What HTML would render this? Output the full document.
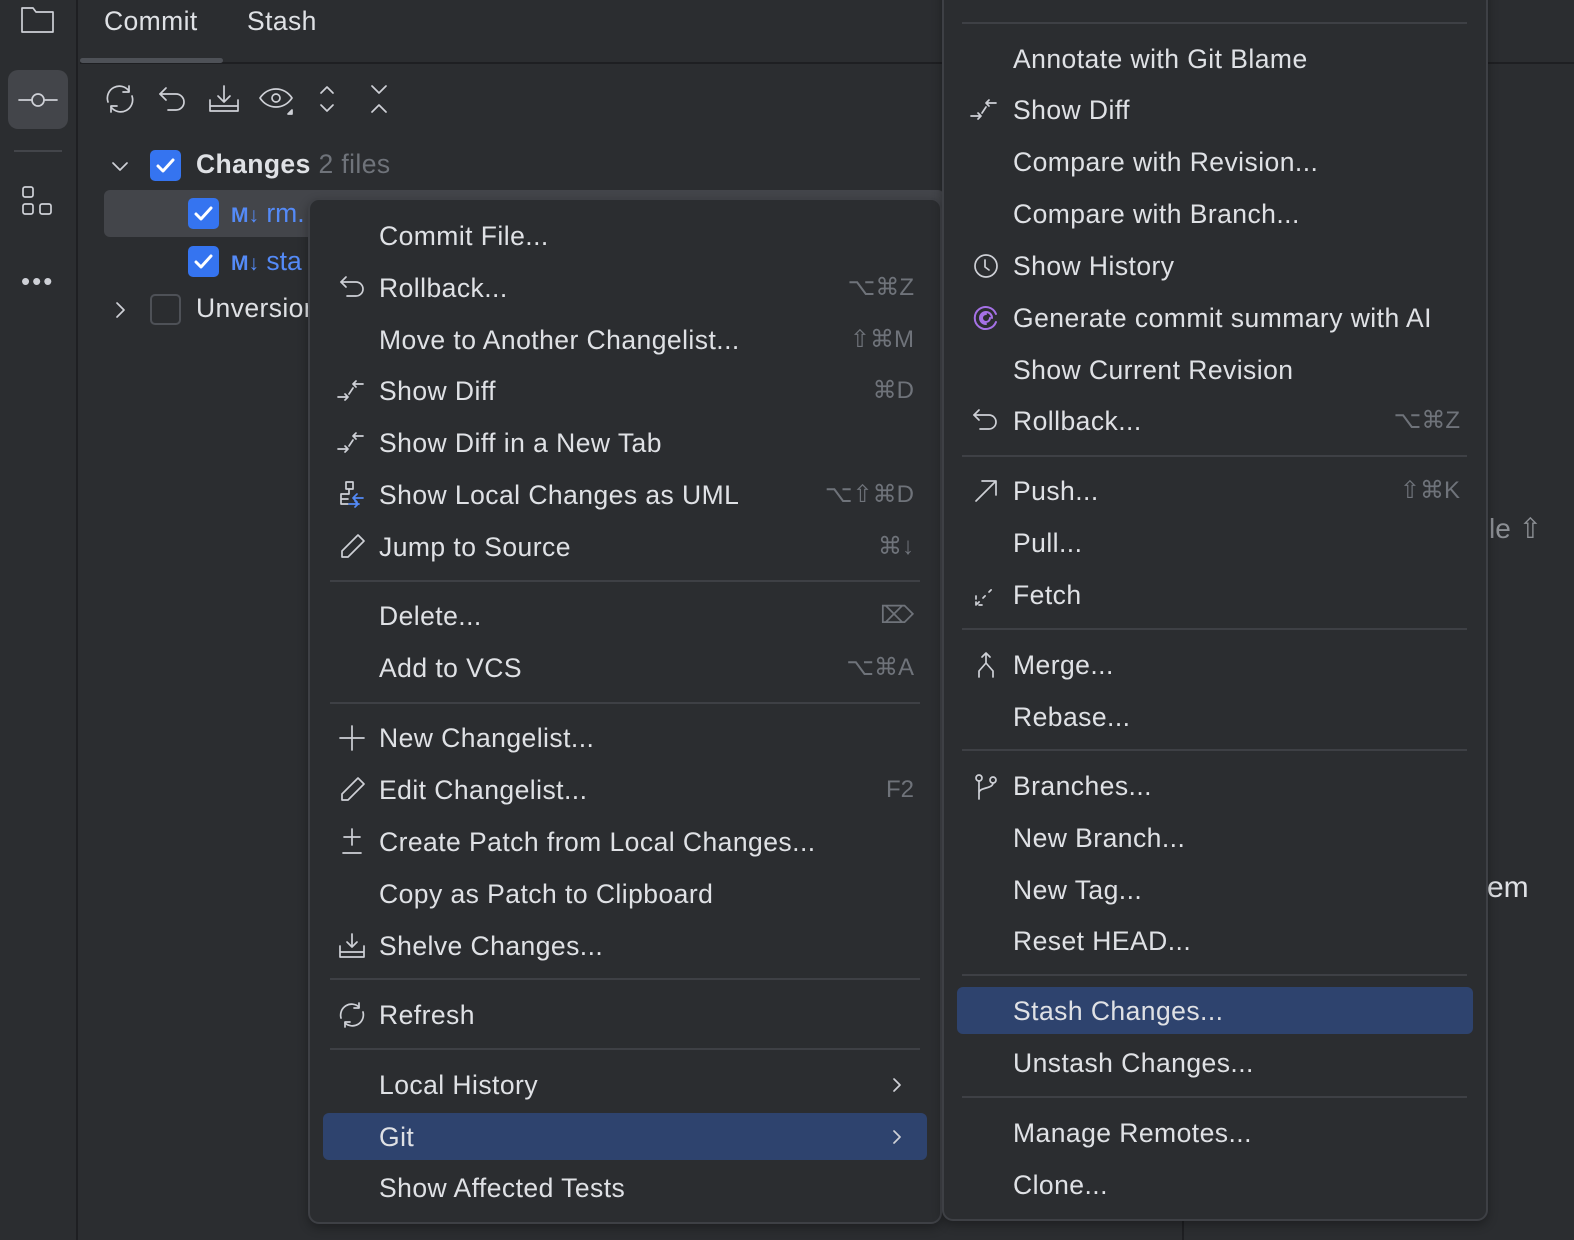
<!DOCTYPE html>
<html><head><meta charset="utf-8"><style>
*{margin:0;padding:0;box-sizing:border-box}
body{width:1574px;height:1240px;background:#2b2d30;font-family:"Liberation Sans",sans-serif;color:#dfe1e5;position:relative;overflow:hidden}
.a{position:absolute}
.it{position:absolute;height:34px;line-height:34px;font-size:26.5px;letter-spacing:0.45px;white-space:nowrap}
.sc{position:absolute;height:34px;line-height:34px;font-size:24px;color:#6f737a;text-align:right;white-space:nowrap}
.sep{position:absolute;height:2px;background:#3e4045}
svg.i{position:absolute;width:30px;height:30px;fill:none;stroke:#ced0d6;stroke-width:1.7;stroke-linecap:round;stroke-linejoin:round}
.cb{position:absolute;width:31px;height:31px;border-radius:5px;background:#3574f0}
</style></head><body>
<div class="a" style="left:0;top:0;width:78px;height:1240px;background:#2b2d30;border-right:2px solid #1e1f22"></div>
<svg class="i" style="left:20px;top:4px;width:36px;height:32px" viewBox="0 0 36 32"><path d="M2 4h11l3 4h17v20H2z"/></svg>
<div class="a" style="left:8px;top:70px;width:60px;height:59px;border-radius:10px;background:#43454a"></div>
<svg class="i" style="left:18px;top:86px;width:40px;height:28px" viewBox="0 0 40 28"><circle cx="20" cy="14" r="6"/><path d="M1 14h13M26 14h13"/></svg>
<div class="a" style="left:14px;top:150px;width:48px;height:2px;background:#43454a"></div>
<svg class="i" style="left:20px;top:184px;width:36px;height:36px" viewBox="0 0 36 36"><rect x="3" y="3" width="10" height="10" rx="2"/><rect x="3" y="20" width="10" height="10" rx="2"/><rect x="20" y="20" width="11" height="10" rx="2"/></svg>
<div class="a" style="left:21px;top:266px;font-size:26px;color:#ced0d6;letter-spacing:2px">•••</div>

<div class="a" style="left:104px;top:6px;font-size:26.5px;letter-spacing:0.4px;color:#dfe1e5">Commit</div>
<div class="a" style="left:247px;top:6px;font-size:26.5px;letter-spacing:0.4px;color:#dfe1e5">Stash</div>
<div class="a" style="left:80px;top:62px;width:1500px;height:2px;background:#1e1f22"></div>
<div class="a" style="left:80px;top:58px;width:143px;height:5px;border-radius:3px;background:#4e5157"></div>
<svg class="i" style="left:103px;top:82px;width:34px;height:34px" viewBox="0 0 34 34"><path d="M5 20a12 12 0 0 1 21-11M29 14a12 12 0 0 1-21 11"/><path d="M26 4v6h-6M8 30v-6h6"/></svg>
<svg class="i" style="left:156px;top:82px;width:34px;height:34px" viewBox="0 0 34 34"><path d="M10 6 4 12l6 6"/><path d="M4 12h16a8 8 0 0 1 0 16h-8"/></svg>
<svg class="i" style="left:207px;top:82px;width:34px;height:34px" viewBox="0 0 34 34"><path d="M17 4v16M11 14l6 6 6-6M3 18v11h28V18M3 24h28"/></svg>
<svg class="i" style="left:258px;top:84px;width:38px;height:34px" viewBox="0 0 38 34"><path d="M2 14c8-12 24-12 32 0-8 12-24 12-32 0z"/><circle cx="18" cy="14" r="4"/><path d="M34 30l-4 0 4-4z" fill="#ced0d6"/></svg>
<svg class="i" style="left:312px;top:82px;width:30px;height:34px" viewBox="0 0 30 34"><path d="M9 11l6-6 6 6M9 23l6 6 6-6"/></svg>
<svg class="i" style="left:364px;top:82px;width:30px;height:34px" viewBox="0 0 30 34"><path d="M8 4l7 7 7-7M8 30l7-7 7 7"/></svg>

<svg class="i" style="left:108px;top:154px;width:24px;height:24px" viewBox="0 0 24 24"><path d="M5 9l7 7 7-7"/></svg>
<div class="cb" style="left:150px;top:150px"></div>
<svg class="i" style="left:150px;top:150px;width:31px;height:31px;stroke:#fff;stroke-width:3" viewBox="0 0 31 31"><path d="M8 16l5 5 10-11"/></svg>
<div class="a" style="left:196px;top:149px;font-size:26.5px;letter-spacing:0.4px;font-weight:bold;color:#dfe1e5">Changes <span style="font-weight:normal;color:#6f737a">2 files</span></div>
<div class="a" style="left:104px;top:190px;width:840px;height:47px;border-radius:6px;background:#43454a"></div>
<div class="cb" style="left:188px;top:198px"></div>
<svg class="i" style="left:188px;top:198px;width:31px;height:31px;stroke:#fff;stroke-width:3" viewBox="0 0 31 31"><path d="M8 16l5 5 10-11"/></svg>
<div class="a" style="left:231px;top:198px;font-size:26.5px;color:#548af7"><b style="font-size:21px">M↓</b> rm.</div>
<div class="cb" style="left:188px;top:246px"></div>
<svg class="i" style="left:188px;top:246px;width:31px;height:31px;stroke:#fff;stroke-width:3" viewBox="0 0 31 31"><path d="M8 16l5 5 10-11"/></svg>
<div class="a" style="left:231px;top:246px;font-size:26.5px;color:#548af7"><b style="font-size:21px">M↓</b> sta</div>
<svg class="i" style="left:108px;top:298px;width:24px;height:24px" viewBox="0 0 24 24"><path d="M9 5l7 7-7 7"/></svg>
<div class="a" style="left:150px;top:294px;width:31px;height:31px;border-radius:5px;border:2px solid #4e5157"></div>
<div class="a" style="left:196px;top:293px;font-size:26.5px;letter-spacing:0.4px;color:#dfe1e5">Unversioned</div>

<div class="a" style="left:1489px;top:512px;font-size:28px;color:#8c8f94">le ⇧</div>
<div class="a" style="left:1487px;top:871px;font-size:30px;color:#dfe1e5">em</div>
<div class="a" style="left:1182px;top:1220px;width:2px;height:20px;background:#1e1f22"></div>

<div class="a" style="left:308px;top:198px;width:634px;height:1026px;background:#2b2d30;border:2px solid #3e4045;border-radius:11px;box-shadow:0 4px 10px rgba(0,0,0,.3)"></div>
<div class="a" style="left:323px;top:1113px;width:604px;height:47px;border-radius:6px;background:#2e436e"></div>

<div class="it" style="left:379px;top:219px">Commit File...</div>
<div class="it" style="left:379px;top:271px">Rollback...</div><div class="sc" style="right:660px;top:271px">⌥⌘Z</div>
<div class="it" style="left:379px;top:323px">Move to Another Changelist...</div><div class="sc" style="right:660px;top:323px">⇧⌘M</div>
<div class="it" style="left:379px;top:374px">Show Diff</div><div class="sc" style="right:660px;top:374px">⌘D</div>
<div class="it" style="left:379px;top:426px">Show Diff in a New Tab</div>
<div class="it" style="left:379px;top:478px">Show Local Changes as UML</div><div class="sc" style="right:660px;top:478px">⌥⇧⌘D</div>
<div class="it" style="left:379px;top:530px">Jump to Source</div><div class="sc" style="right:660px;top:530px">⌘↓</div>
<div class="sep" style="left:330px;top:580px;width:590px"></div>
<div class="it" style="left:379px;top:599px">Delete...</div><div class="sc" style="right:660px;top:599px">⌦</div>
<div class="it" style="left:379px;top:651px">Add to VCS</div><div class="sc" style="right:660px;top:651px">⌥⌘A</div>
<div class="sep" style="left:330px;top:702px;width:590px"></div>
<div class="it" style="left:379px;top:721px">New Changelist...</div>
<div class="it" style="left:379px;top:773px">Edit Changelist...</div><div class="sc" style="right:660px;top:773px">F2</div>
<div class="it" style="left:379px;top:825px">Create Patch from Local Changes...</div>
<div class="it" style="left:379px;top:877px">Copy as Patch to Clipboard</div>
<div class="it" style="left:379px;top:929px">Shelve Changes...</div>
<div class="sep" style="left:330px;top:978px;width:590px"></div>
<div class="it" style="left:379px;top:998px">Refresh</div>
<div class="sep" style="left:330px;top:1048px;width:590px"></div>
<div class="it" style="left:379px;top:1068px">Local History</div>
<div class="it" style="left:379px;top:1120px">Git</div>
<div class="it" style="left:379px;top:1171px">Show Affected Tests</div>
<svg class="i" style="left:886px;top:1074px;width:22px;height:22px" viewBox="0 0 22 22"><path d="M8 5l6 6-6 6"/></svg>
<svg class="i" style="left:886px;top:1126px;width:22px;height:22px" viewBox="0 0 22 22"><path d="M8 5l6 6-6 6"/></svg>

<svg class="i" style="left:338px;top:273px" viewBox="0 0 30 30"><path d="M8 4 3 9l5 5"/><path d="M3 9h15a7 7 0 0 1 0 14h-9"/></svg>
<svg class="i" style="left:336px;top:376px" viewBox="0 0 30 30"><path d="M2 21h10M9 18l3 3-3 3M17 8h10M20 5l-3 3 3 3M13 18l4-6"/></svg>
<svg class="i" style="left:336px;top:428px" viewBox="0 0 30 30"><path d="M2 21h10M9 18l3 3-3 3M17 8h10M20 5l-3 3 3 3M13 18l4-6"/></svg>
<svg class="i" style="left:337px;top:480px" viewBox="0 0 30 30"><rect x="9" y="2" width="7" height="7"/><path d="M12 9v5H4v10h7M4 19h7"/><path d="M16 18h10M20 14l-4 4 4 4M12 24h10M18 21l3 3-3 3" stroke="#548af7"/></svg>
<svg class="i" style="left:338px;top:532px" viewBox="0 0 30 30"><path d="M20 3l6 6L10 25H4v-6z"/></svg>
<svg class="i" style="left:337px;top:723px" viewBox="0 0 30 30"><path d="M15 3v24M3 15h24"/></svg>
<svg class="i" style="left:338px;top:775px" viewBox="0 0 30 30"><path d="M20 3l6 6L10 25H4v-6z"/></svg>
<svg class="i" style="left:338px;top:827px" viewBox="0 0 30 30"><path d="M14 2v16M6 10h16M5 26h18"/></svg>
<svg class="i" style="left:337px;top:931px" viewBox="0 0 30 30"><path d="M15 3v13M10 11l5 5 5-5M3 15v11h24V15M3 21h24"/></svg>
<svg class="i" style="left:337px;top:1000px" viewBox="0 0 30 30"><path d="M4 18A11 11 0 0 1 22 7M26 12A11 11 0 0 1 8 23"/><path d="M22 3v5h-5M8 27v-5h5"/></svg>

<div class="a" style="left:942px;top:-20px;width:546px;height:1241px;background:#2b2d30;border:2px solid #3e4045;border-radius:11px;box-shadow:0 4px 10px rgba(0,0,0,.3)"></div>
<div class="sep" style="left:962px;top:22px;width:505px"></div>
<div class="a" style="left:957px;top:987px;width:516px;height:47px;border-radius:6px;background:#2e436e"></div>
<div class="it" style="left:1013px;top:42px">Annotate with Git Blame</div>
<div class="it" style="left:1013px;top:93px">Show Diff</div>
<div class="it" style="left:1013px;top:145px">Compare with Revision...</div>
<div class="it" style="left:1013px;top:197px">Compare with Branch...</div>
<div class="it" style="left:1013px;top:249px">Show History</div>
<div class="it" style="left:1013px;top:301px">Generate commit summary with AI</div>
<div class="it" style="left:1013px;top:353px">Show Current Revision</div>
<div class="it" style="left:1013px;top:404px">Rollback...</div><div class="sc" style="right:114px;top:404px">⌥⌘Z</div>
<div class="sep" style="left:962px;top:455px;width:505px"></div>
<div class="it" style="left:1013px;top:474px">Push...</div><div class="sc" style="right:114px;top:474px">⇧⌘K</div>
<div class="it" style="left:1013px;top:526px">Pull...</div>
<div class="it" style="left:1013px;top:578px">Fetch</div>
<div class="sep" style="left:962px;top:628px;width:505px"></div>
<div class="it" style="left:1013px;top:648px">Merge...</div>
<div class="it" style="left:1013px;top:700px">Rebase...</div>
<div class="sep" style="left:962px;top:749px;width:505px"></div>
<div class="it" style="left:1013px;top:769px">Branches...</div>
<div class="it" style="left:1013px;top:821px">New Branch...</div>
<div class="it" style="left:1013px;top:873px">New Tag...</div>
<div class="it" style="left:1013px;top:924px">Reset HEAD...</div>
<div class="sep" style="left:962px;top:974px;width:505px"></div>
<div class="it" style="left:1013px;top:994px">Stash Changes...</div>
<div class="it" style="left:1013px;top:1046px">Unstash Changes...</div>
<div class="sep" style="left:962px;top:1096px;width:505px"></div>
<div class="it" style="left:1013px;top:1116px">Manage Remotes...</div>
<div class="it" style="left:1013px;top:1168px">Clone...</div>

<svg class="i" style="left:969px;top:95px" viewBox="0 0 30 30"><path d="M2 21h10M9 18l3 3-3 3M17 8h10M20 5l-3 3 3 3M13 18l4-6"/></svg>
<svg class="i" style="left:971px;top:251px" viewBox="0 0 30 30"><circle cx="15" cy="15" r="11"/><path d="M14 9v7l4 3"/></svg>
<svg class="i" style="left:971px;top:303px;stroke:#a571e6;stroke-width:2" viewBox="0 0 30 30"><path d="M25 11A11 11 0 1 0 25 19M15 11a4 4 0 1 0 4 4M21 15a6 6 0 1 0-6 6"/></svg>
<svg class="i" style="left:971px;top:406px" viewBox="0 0 30 30"><path d="M8 4 3 9l5 5"/><path d="M3 9h15a7 7 0 0 1 0 14h-9"/></svg>
<svg class="i" style="left:971px;top:476px" viewBox="0 0 30 30"><path d="M5 25L25 5M11 5h14v14"/></svg>
<svg class="i" style="left:971px;top:580px" viewBox="0 0 30 30"><path d="M5 16v9h9M6 24l3-3M12 18l3-3M18 12l4-4" stroke-dasharray="3 3"/></svg>
<svg class="i" style="left:971px;top:650px" viewBox="0 0 30 30"><path d="M15 3v10M11 7l4-4 4 4M15 13l-7 8v6M15 13l7 8v6"/></svg>
<svg class="i" style="left:971px;top:771px" viewBox="0 0 30 30"><circle cx="8" cy="7" r="3"/><circle cx="22" cy="9" r="3"/><path d="M8 10v18M22 12c0 6-14 4-14 10"/></svg>
</body></html>
